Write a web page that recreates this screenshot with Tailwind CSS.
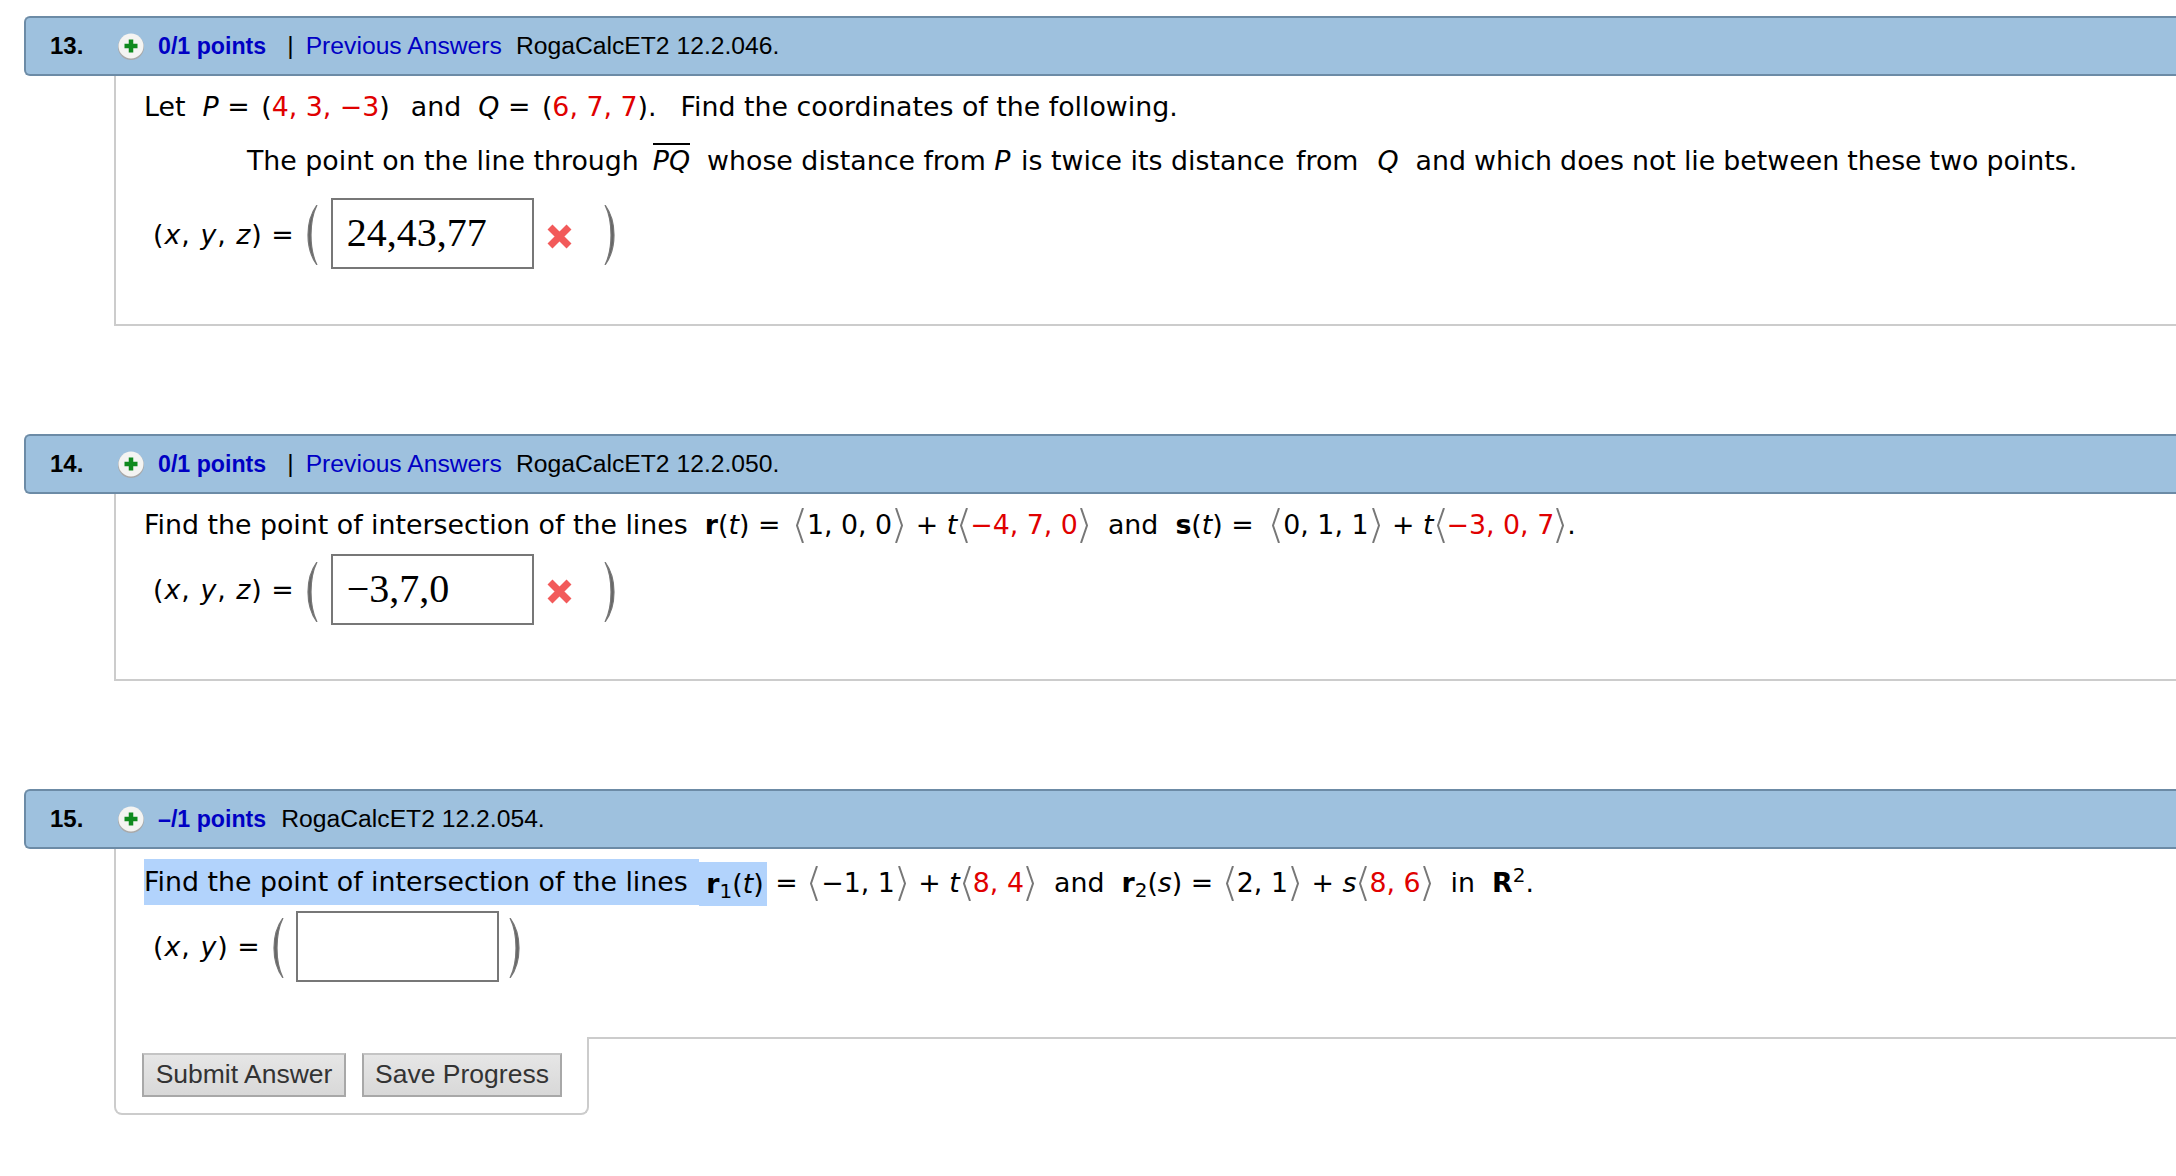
<!DOCTYPE html>
<html lang="en">
<head>
<meta charset="UTF-8">
<title>Homework questions</title>
<script src="https://cdn.jsdelivr.net/npm/@tailwindcss/browser@4"></script>
</head>
<body class="bg-white overflow-hidden h-[1176px] pt-4 pl-6 text-black">

<!-- Question 13 -->
<section>
  <div class="h-[60px] flex items-center bg-[#9ec1de] border-y-2 border-l-2 border-[#6c8ba6] rounded-l-md font-['Liberation_Sans',sans-serif] text-[24.7px] whitespace-pre">
    <b class="ml-6 w-[67px] text-[24px]">13.</b>
    <svg class="w-[28px] h-[28px]" viewBox="0 0 28 28"><circle cx="14" cy="15" r="13" fill="#a9a9a9"/><circle cx="14" cy="14" r="12.5" fill="#f4f4f2"/><path d="M14 7.5v13M7.5 14h13" stroke="#0f8a1e" stroke-width="4.5"/></svg>
    <b class="ml-[13px] text-[#0000c4] text-[23.2px]">0/1 points</b>
    <span class="ml-[21px]">|</span>
    <span class="ml-[12px] text-[#0000c4]">Previous Answers</span>
    <span class="ml-[14px]">RogaCalcET2 12.2.046.</span>
  </div>
  <div class="ml-[90px] border-l-2 border-b-2 border-[#cccccc] pl-[28px] pt-[15px] pb-[55px] font-['DejaVu_Sans',sans-serif] text-[26.8px]">
    <div class="h-8 leading-8 whitespace-pre">Let  <i>P</i> = <span class="ml-[3px]">(</span><span class="text-[#e00000]">4, 3, −3</span>)<span class="ml-[4px]">  and  </span><i>Q</i> = <span class="ml-[3px]">(</span><span class="text-[#e00000]">6, 7, 7</span>).<span class="ml-[7px]">  Find the coordinates of the following.</span></div>
    <div class="h-8 leading-8 mt-[22px] ml-[103px] whitespace-pre">The point on the line through  <span class="border-t-2 border-black -ml-[3px]"><i>PQ</i></span>  whose distance from <i>P</i> <span class="ml-[2px]">is twice its distance </span><span class="ml-[3px]">from  </span><i class="ml-[2px]">Q</i>  <span class="[word-spacing:-0.5px]">and which does not lie between these two points.</span></div>
    <div class="mt-[21px] flex items-center h-[71px] pl-[9px] whitespace-pre">
      <span class="mt-[3px]"><span class="tracking-[1px]">(<i>x</i>, <i>y</i>, <i>z</i>)</span> =</span>
      <svg class="ml-[10px] mt-[3px] w-[14px] h-[60px]" viewBox="0 0 14 60"><path d="M13 0C1 16 1 44 13 60C5 44 5 16 13 0Z" fill="#666" stroke="#777" stroke-width="1.2"/></svg>
      <div class="ml-[13px] w-[203px] h-[71px] border-2 border-[#777777] pl-[14px] font-['Liberation_Serif',serif] text-[40px] leading-[66px]">24,43,77</div>
      <svg class="ml-[12px] w-[27px] h-[27px] mt-[6px]" viewBox="0 0 27 27"><path d="M4 4L23 23M23 4L4 23" stroke="#f25a5a" stroke-width="7"/></svg>
      <svg class="ml-[31px] mt-[3px] w-[14px] h-[60px]" viewBox="0 0 14 60"><path d="M1 0C13 16 13 44 1 60C9 44 9 16 1 0Z" fill="#666" stroke="#777" stroke-width="1.2"/></svg>
    </div>
  </div>
</section>

<!-- Question 14 -->
<section class="mt-[108px]">
  <div class="h-[60px] flex items-center bg-[#9ec1de] border-y-2 border-l-2 border-[#6c8ba6] rounded-l-md font-['Liberation_Sans',sans-serif] text-[24.7px] whitespace-pre">
    <b class="ml-6 w-[67px] text-[24px]">14.</b>
    <svg class="w-[28px] h-[28px]" viewBox="0 0 28 28"><circle cx="14" cy="15" r="13" fill="#a9a9a9"/><circle cx="14" cy="14" r="12.5" fill="#f4f4f2"/><path d="M14 7.5v13M7.5 14h13" stroke="#0f8a1e" stroke-width="4.5"/></svg>
    <b class="ml-[13px] text-[#0000c4] text-[23.2px]">0/1 points</b>
    <span class="ml-[21px]">|</span>
    <span class="ml-[12px] text-[#0000c4]">Previous Answers</span>
    <span class="ml-[14px]">RogaCalcET2 12.2.050.</span>
  </div>
  <div class="ml-[90px] border-l-2 border-b-2 border-[#cccccc] pl-[28px] pt-[15px] pb-[54px] font-['DejaVu_Sans',sans-serif] text-[26.8px]">
    <div class="h-8 flex items-center whitespace-pre">Find the point of intersection of the lines  <b>r</b>(<i>t</i>) = <svg class="ml-[6px] mr-[3px] w-[9px] h-[35px]" viewBox="0 0 9 35"><path d="M8 0L2 17.5L8 35" fill="none" stroke="#777" stroke-width="2"/></svg>1, 0, 0<svg class="mx-[3px] w-[9px] h-[35px]" viewBox="0 0 9 35"><path d="M1 0L7 17.5L1 35" fill="none" stroke="#777" stroke-width="2"/></svg> + <i>t</i><svg class="mx-[2px] w-[9px] h-[35px]" viewBox="0 0 9 35"><path d="M8 0L2 17.5L8 35" fill="none" stroke="#777" stroke-width="2"/></svg><span class="text-[#e00000]">−4, 7, 0</span><svg class="mx-[2px] w-[9px] h-[35px]" viewBox="0 0 9 35"><path d="M1 0L7 17.5L1 35" fill="none" stroke="#777" stroke-width="2"/></svg>  and  <b>s</b>(<i>t</i>) = <svg class="ml-[9px] mr-[3px] w-[9px] h-[35px]" viewBox="0 0 9 35"><path d="M8 0L2 17.5L8 35" fill="none" stroke="#777" stroke-width="2"/></svg>0, 1, 1<svg class="mx-[3px] w-[9px] h-[35px]" viewBox="0 0 9 35"><path d="M1 0L7 17.5L1 35" fill="none" stroke="#777" stroke-width="2"/></svg> + <i>t</i><svg class="mx-[2px] w-[9px] h-[35px]" viewBox="0 0 9 35"><path d="M8 0L2 17.5L8 35" fill="none" stroke="#777" stroke-width="2"/></svg><span class="text-[#e00000]">−3, 0, 7</span><svg class="mx-[2px] w-[9px] h-[35px]" viewBox="0 0 9 35"><path d="M1 0L7 17.5L1 35" fill="none" stroke="#777" stroke-width="2"/></svg>.</div>
    <div class="mt-[13px] flex items-center h-[71px] pl-[9px] whitespace-pre">
      <span class="mt-[1px]"><span class="tracking-[1px]">(<i>x</i>, <i>y</i>, <i>z</i>)</span> =</span>
      <svg class="ml-[10px] mt-[4px] w-[14px] h-[60px]" viewBox="0 0 14 60"><path d="M13 0C1 16 1 44 13 60C5 44 5 16 13 0Z" fill="#666" stroke="#777" stroke-width="1.2"/></svg>
      <div class="ml-[13px] w-[203px] h-[71px] border-2 border-[#777777] pl-[14px] font-['Liberation_Serif',serif] text-[40px] leading-[66px]">−3,7,0</div>
      <svg class="ml-[12px] w-[27px] h-[27px] mt-[4px]" viewBox="0 0 27 27"><path d="M4 4L23 23M23 4L4 23" stroke="#f25a5a" stroke-width="7"/></svg>
      <svg class="ml-[31px] mt-[4px] w-[14px] h-[60px]" viewBox="0 0 14 60"><path d="M1 0C13 16 13 44 1 60C9 44 9 16 1 0Z" fill="#666" stroke="#777" stroke-width="1.2"/></svg>
    </div>
  </div>
</section>

<!-- Question 15 -->
<section class="mt-[108px]">
  <div class="h-[60px] flex items-center bg-[#9ec1de] border-y-2 border-l-2 border-[#6c8ba6] rounded-l-md font-['Liberation_Sans',sans-serif] text-[24.7px] whitespace-pre">
    <b class="ml-6 w-[67px] text-[24px]">15.</b>
    <svg class="w-[28px] h-[28px]" viewBox="0 0 28 28"><circle cx="14" cy="15" r="13" fill="#a9a9a9"/><circle cx="14" cy="14" r="12.5" fill="#f4f4f2"/><path d="M14 7.5v13M7.5 14h13" stroke="#0f8a1e" stroke-width="4.5"/></svg>
    <b class="ml-[13px] text-[#0000c4] text-[23.2px]">–/1 points</b>
    <span class="ml-[15px]">RogaCalcET2 12.2.054.</span>
  </div>
  <div class="ml-[90px] border-l-2 border-[#cccccc] pl-[28px] pt-[18px] pb-[55px] font-['DejaVu_Sans',sans-serif] text-[26.8px]">
    <div class="h-8 flex items-center whitespace-pre"><span class="bg-[#b2d3fc] h-[46px] leading-[46px] pr-[3px] -mt-[2px]">Find the point of intersection of the lines </span><span class="bg-[#b2d3fc] h-[44px] leading-[44px] mt-[2px] pl-[7px] pr-[3px]"><b>r</b><sub class="text-[20px]">1</sub>(<i>t</i>)</span> = <svg class="mx-[3px] w-[9px] h-[35px]" viewBox="0 0 9 35"><path d="M8 0L2 17.5L8 35" fill="none" stroke="#777" stroke-width="2"/></svg>−1, 1<svg class="mx-[3px] w-[9px] h-[35px]" viewBox="0 0 9 35"><path d="M1 0L7 17.5L1 35" fill="none" stroke="#777" stroke-width="2"/></svg> + <i>t</i><svg class="mx-[2px] w-[9px] h-[35px]" viewBox="0 0 9 35"><path d="M8 0L2 17.5L8 35" fill="none" stroke="#777" stroke-width="2"/></svg><span class="text-[#e00000]">8, 4</span><svg class="mx-[2px] w-[9px] h-[35px]" viewBox="0 0 9 35"><path d="M1 0L7 17.5L1 35" fill="none" stroke="#777" stroke-width="2"/></svg>  and  <span><b>r</b><sub class="text-[20px]">2</sub>(<i>s</i>)</span> = <svg class="mx-[3px] w-[9px] h-[35px]" viewBox="0 0 9 35"><path d="M8 0L2 17.5L8 35" fill="none" stroke="#777" stroke-width="2"/></svg>2, 1<svg class="mx-[3px] w-[9px] h-[35px]" viewBox="0 0 9 35"><path d="M1 0L7 17.5L1 35" fill="none" stroke="#777" stroke-width="2"/></svg> + <i>s</i><svg class="mx-[2px] w-[9px] h-[35px]" viewBox="0 0 9 35"><path d="M8 0L2 17.5L8 35" fill="none" stroke="#777" stroke-width="2"/></svg><span class="text-[#e00000]">8, 6</span><svg class="mx-[2px] w-[9px] h-[35px]" viewBox="0 0 9 35"><path d="M1 0L7 17.5L1 35" fill="none" stroke="#777" stroke-width="2"/></svg>  in  <span><b>R</b><sup class="text-[20px]">2</sup>.</span></div>
    <div class="mt-[12px] flex items-center h-[71px] pl-[9px] whitespace-pre">
      <span class="mt-[2px]"><span class="tracking-[1px]">(<i>x</i>, <i>y</i>)</span> =</span>
      <svg class="ml-[10px] mt-[3px] w-[14px] h-[60px]" viewBox="0 0 14 60"><path d="M13 0C1 16 1 44 13 60C5 44 5 16 13 0Z" fill="#666" stroke="#777" stroke-width="1.2"/></svg>
      <div class="ml-[12px] w-[203px] h-[71px] border-2 border-[#777777]"></div>
      <svg class="ml-[10px] mt-[3px] w-[14px] h-[60px]" viewBox="0 0 14 60"><path d="M1 0C13 16 13 44 1 60C9 44 9 16 1 0Z" fill="#666" stroke="#777" stroke-width="1.2"/></svg>
    </div>
  </div>
  <div class="ml-[90px] flex">
    <div class="w-[475px] h-[78px] border-x-2 border-b-2 border-[#cccccc] rounded-b-lg pt-[16px] pl-[26px] flex gap-[16px] font-['Liberation_Sans',sans-serif] text-[26.5px] text-[#333333]">
      <button class="w-[204px] h-[44px] pb-[3px] bg-linear-to-b from-[#e6e6e6] to-[#d8d8d8] border-2 border-[#a8a8a8] border-t-[#c4c4c4]">Submit Answer</button>
      <button class="w-[200px] h-[44px] pb-[3px] bg-linear-to-b from-[#e6e6e6] to-[#d8d8d8] border-2 border-[#a8a8a8] border-t-[#c4c4c4]">Save Progress</button>
    </div>
    <div class="flex-1 border-t-2 border-[#cccccc]"></div>
  </div>
</section>

</body>
</html>
